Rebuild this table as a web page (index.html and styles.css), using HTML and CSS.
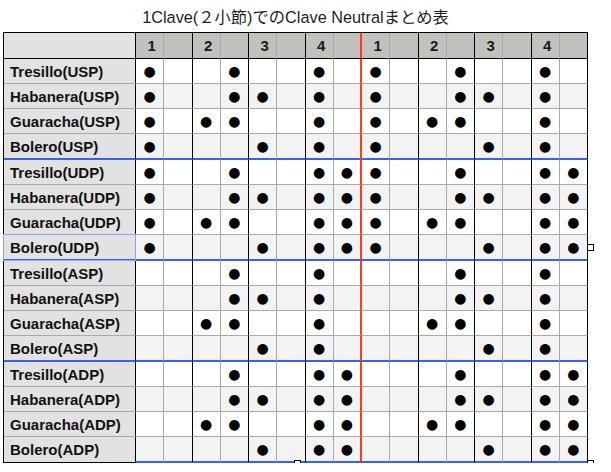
FILE: index.html
```html
<!DOCTYPE html>
<html lang="ja">
<head>
<meta charset="utf-8">
<title>Clave Neutral まとめ表</title>
<link rel="stylesheet" href="styles.css">
</head>
<body>
<h1 class="title">1Clave(２小節)でのClave Neutralまとめ表</h1>
<div class="sheet">
  <div class="row head"><span class="lab"></span><span>1</span><span></span><span>2</span><span></span><span>3</span><span></span><span>4</span><span></span><span>1</span><span></span><span>2</span><span></span><span>3</span><span></span><span>4</span><span></span></div>
  <div class="row"><span class="lab">Tresillo(USP)</span><span>●</span><span></span><span></span><span>●</span><span></span><span></span><span>●</span><span></span><span>●</span><span></span><span></span><span>●</span><span></span><span></span><span>●</span><span></span></div>
  <div class="row"><span class="lab">Habanera(USP)</span><span>●</span><span></span><span></span><span>●</span><span>●</span><span></span><span>●</span><span></span><span>●</span><span></span><span></span><span>●</span><span>●</span><span></span><span>●</span><span></span></div>
  <div class="row"><span class="lab">Guaracha(USP)</span><span>●</span><span></span><span>●</span><span>●</span><span></span><span></span><span>●</span><span></span><span>●</span><span></span><span>●</span><span>●</span><span></span><span></span><span>●</span><span></span></div>
  <div class="row end"><span class="lab">Bolero(USP)</span><span>●</span><span></span><span></span><span></span><span>●</span><span></span><span>●</span><span></span><span>●</span><span></span><span></span><span></span><span>●</span><span></span><span>●</span><span></span></div>
  <div class="row"><span class="lab">Tresillo(UDP)</span><span>●</span><span></span><span></span><span>●</span><span></span><span></span><span>●</span><span>●</span><span>●</span><span></span><span></span><span>●</span><span></span><span></span><span>●</span><span>●</span></div>
  <div class="row"><span class="lab">Habanera(UDP)</span><span>●</span><span></span><span></span><span>●</span><span>●</span><span></span><span>●</span><span>●</span><span>●</span><span></span><span></span><span>●</span><span>●</span><span></span><span>●</span><span>●</span></div>
  <div class="row"><span class="lab">Guaracha(UDP)</span><span>●</span><span></span><span>●</span><span>●</span><span></span><span></span><span>●</span><span>●</span><span>●</span><span></span><span>●</span><span>●</span><span></span><span></span><span>●</span><span>●</span></div>
  <div class="row end"><span class="lab sel">Bolero(UDP)</span><span>●</span><span></span><span></span><span></span><span>●</span><span></span><span>●</span><span>●</span><span>●</span><span></span><span></span><span></span><span>●</span><span></span><span>●</span><span>●</span></div>
  <div class="row"><span class="lab">Tresillo(ASP)</span><span></span><span></span><span></span><span>●</span><span></span><span></span><span>●</span><span></span><span></span><span></span><span></span><span>●</span><span></span><span></span><span>●</span><span></span></div>
  <div class="row"><span class="lab">Habanera(ASP)</span><span></span><span></span><span></span><span>●</span><span>●</span><span></span><span>●</span><span></span><span></span><span></span><span></span><span>●</span><span>●</span><span></span><span>●</span><span></span></div>
  <div class="row"><span class="lab">Guaracha(ASP)</span><span></span><span></span><span>●</span><span>●</span><span></span><span></span><span>●</span><span></span><span></span><span></span><span>●</span><span>●</span><span></span><span></span><span>●</span><span></span></div>
  <div class="row end"><span class="lab">Bolero(ASP)</span><span></span><span></span><span></span><span></span><span>●</span><span></span><span>●</span><span></span><span></span><span></span><span></span><span></span><span>●</span><span></span><span>●</span><span></span></div>
  <div class="row"><span class="lab">Tresillo(ADP)</span><span></span><span></span><span></span><span>●</span><span></span><span></span><span>●</span><span>●</span><span></span><span></span><span></span><span>●</span><span></span><span></span><span>●</span><span>●</span></div>
  <div class="row"><span class="lab">Habanera(ADP)</span><span></span><span></span><span></span><span>●</span><span>●</span><span></span><span>●</span><span>●</span><span></span><span></span><span></span><span>●</span><span>●</span><span></span><span>●</span><span>●</span></div>
  <div class="row"><span class="lab">Guaracha(ADP)</span><span></span><span></span><span>●</span><span>●</span><span></span><span></span><span>●</span><span>●</span><span></span><span></span><span>●</span><span>●</span><span></span><span></span><span>●</span><span>●</span></div>
  <div class="row last"><span class="lab">Bolero(ADP)</span><span></span><span></span><span></span><span></span><span>●</span><span></span><span>●</span><span>●</span><span></span><span></span><span></span><span></span><span>●</span><span></span><span>●</span><span>●</span></div>
  <span class="handle h-right"></span>
  <span class="handle h-bottom"></span>
  <span class="handle h-corner"></span>
</div>
</body>
</html>
```

FILE: styles.css
```css
* { box-sizing: border-box; }

body {
  margin: 0;
  background: #ffffff;
  font-family: "Liberation Sans", Arial, sans-serif;
}

.title {
  margin: 0;
  width: 591px;
  height: 32px;
  padding-top: 8px;
  font: 400 16.3px/18px "Liberation Sans", "Noto Sans CJK JP", sans-serif;
  color: #1e1e1e;
  text-align: center;
}

.sheet {
  position: relative;
  margin-left: 3px;
  width: 585px;
  border-left: 1px solid #000;
  border-top: 1px solid #000;
}

.row {
  display: grid;
  grid-template-columns: 132px repeat(16, 1fr);
  height: 25px;
}

.row > span {
  display: flex;
  align-items: center;
  justify-content: center;
  border-right: 1px solid #a9a9a9;
  border-bottom: 1px solid #a9a9a9;
  font-family: "DejaVu Sans", sans-serif;
  font-size: 14px;
  color: #000;
  background: #ffffff;
}

.row > span:nth-child(odd) { border-right-color: #000; }
.row > span:nth-child(9) { border-right: 2px solid #ff3b1c; }

.row:nth-child(odd) > span { background: #f3f3f3; }

.row > .lab {
  justify-content: flex-start;
  padding-left: 6px;
  font: 700 15px "Liberation Sans", Arial, sans-serif;
  color: #111;
  background: #e2e2e2;
}
.row:nth-child(odd) > .lab { background: #e2e2e2; }

.row.head { height: 26px; }
.row.head > span {
  padding-left: 4px;
  background: #c1c2be;
  border-bottom-color: #000;
  font: 700 15px "Liberation Sans", Arial, sans-serif;
  color: #1a1a1a;
}

.row.end { height: 26px; }
.row.end > span { border-bottom: 2px solid #3b5ff0; }

.row.last { height: 26px; }
.row.last > span { border-bottom: 2px solid #3b5ff0; }
.row.last > .lab { border-bottom: 1px solid #000; }

.lab.sel { position: relative; }
.lab.sel::after {
  content: "";
  position: absolute;
  left: -1px;
  top: -1px;
  right: -1px;
  bottom: -2px;
  border: 1px solid #8aa4f2;
}

.handle {
  position: absolute;
  width: 7px;
  height: 7px;
  background: #fff;
  border: 1px solid #000;
}
.h-right { left: 583px; top: 211px; }
.h-bottom { left: 290px; top: 427px; }
.h-corner { left: 583px; top: 427px; }
```
